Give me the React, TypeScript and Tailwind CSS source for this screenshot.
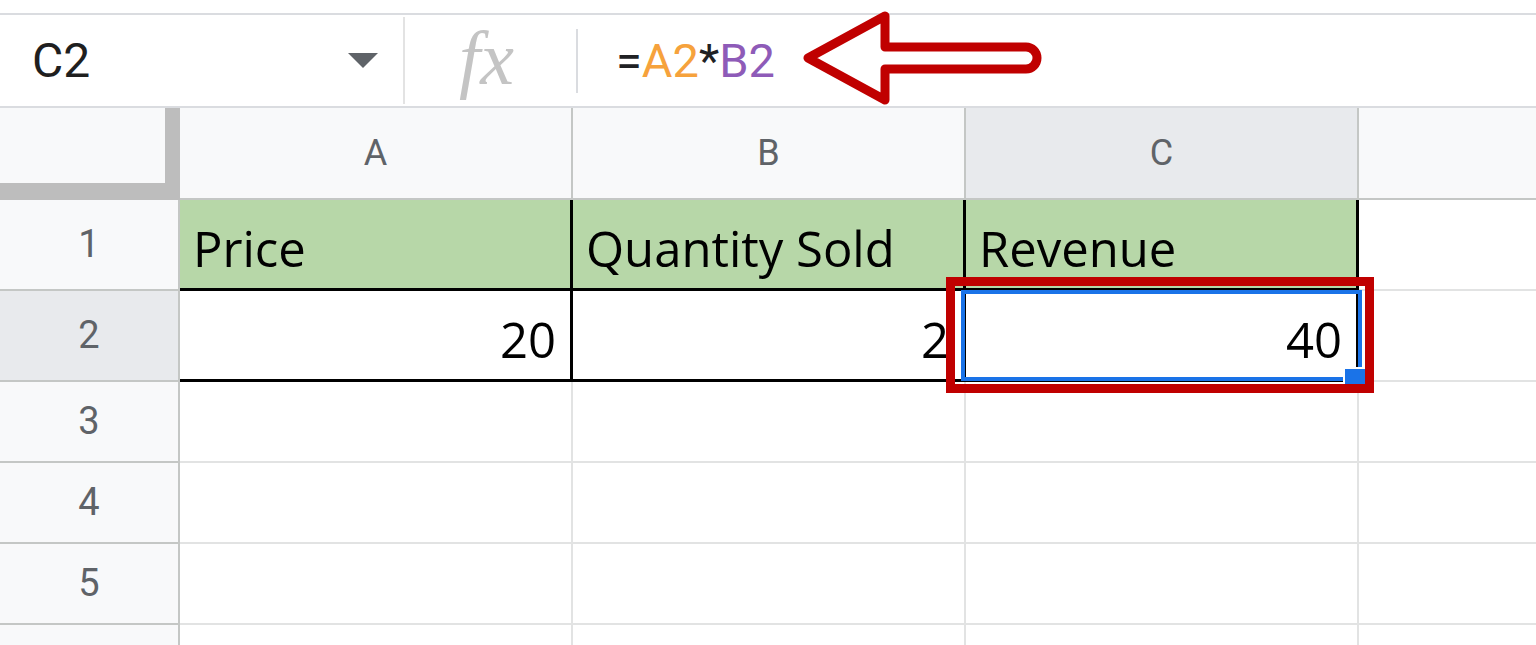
import React from "react";

const ROBOTO = { fontFamily: "Roboto, 'Liberation Sans', sans-serif" };
const CELLFONT = { fontFamily: "'Open Sans', 'Noto Sans', sans-serif" };

function RowHead({ n, h, active }: { n: string; h: string; active?: boolean }) {
  return (
    <div
      className={`w-[180px] shrink-0 flex items-center justify-center border-r-2 border-b-2 border-[#c4c7c5] text-[38px] text-[#5f6368] ${h} ${
        active ? "bg-[#e8eaed]" : "bg-[#f8f9fa]"
      }`}
      style={ROBOTO}
    >
      {n}
    </div>
  );
}

export default function App() {
  return (
    <div className="relative w-[1536px] h-[645px] overflow-hidden bg-white">
      <div className="h-[13px]" />
      <div className="h-[2px] bg-[#dadce0]" />
      {/* formula bar */}
      <div className="flex h-[93px] items-stretch border-b-2 border-[#dadce0]">
        <div className="w-[403px] flex items-center justify-between pl-[32px] pr-[25px]">
          <span className="text-[48px] text-[#1f1f1f] leading-none" style={ROBOTO}>
            C2
          </span>
          <svg width="30" height="15" viewBox="0 0 30 15">
            <path d="M0 0 L30 0 L15 15 Z" fill="#5f6368" />
          </svg>
        </div>
        <div className="w-[2px] bg-[#e3e3e3] my-[2px]" />
        <div className="w-[171px] flex items-center justify-center pr-[8px]">
          <span
            className="text-[76px] italic text-[#c4c4c4] leading-none pb-[6px]"
            style={{ fontFamily: "'Liberation Serif', 'DejaVu Serif', serif" }}
          >
            fx
          </span>
        </div>
        <div className="flex items-center">
          <div className="w-[2px] h-[64px] bg-[#dadce0]" />
        </div>
        <div className="flex items-center pl-[38px]">
          <span className="text-[47px] leading-none" style={ROBOTO}>
            <span className="text-[#202124]">=</span>
            <span className="text-[#f6a23c]">A2</span>
            <span className="text-[#202124]">*</span>
            <span className="text-[#8e5bb8]">B2</span>
          </span>
        </div>
      </div>

      {/* column headers */}
      <div className="flex h-[92px]">
        <div className="w-[180px] shrink-0 bg-[#f8f9fa] border-r-[15px] border-b-[17px] border-[#bdbdbd]" />
        {["A", "B", "C"].map((c) => (
          <div
            key={c}
            className={`w-[393px] shrink-0 flex items-center justify-center border-r-2 border-b-2 border-[#c4c7c5] text-[36px] text-[#5f6368] ${
              c === "C" ? "bg-[#e8eaed]" : "bg-[#f8f9fa]"
            }`}
            style={ROBOTO}
          >
            {c}
          </div>
        ))}
        <div className="flex-1 bg-[#f8f9fa] border-b-2 border-[#c4c7c5]" />
      </div>

      {/* row 1 */}
      <div className="flex h-[91px]">
        <RowHead n="1" h="h-[91px]" />
        {["Price", "Quantity Sold", "Revenue"].map((t) => (
          <div
            key={t}
            className="w-[393px] shrink-0 flex items-end pl-[13px] pb-[3px] bg-[#b7d7a8] border-r-[3px] border-b-[3px] border-black text-[49px] text-black"
            style={CELLFONT}
          >
            {t}
          </div>
        ))}
        <div className="flex-1 border-b-2 border-[#e2e3e3]" />
      </div>

      {/* row 2 */}
      <div className="flex h-[91px]">
        <RowHead n="2" h="h-[91px]" active />
        {["20", "2", "40"].map((t, i) => (
          <div
            key={i}
            className="w-[393px] shrink-0 flex items-end justify-end pr-[14px] pb-[3px] bg-white border-r-[3px] border-b-[3px] border-black text-[49px] text-black"
            style={CELLFONT}
          >
            {t}
          </div>
        ))}
        <div className="flex-1 border-b-2 border-[#e2e3e3]" />
      </div>

      {/* rows 3-6 */}
      {["3", "4", "5", ""].map((n, r) => (
        <div key={r} className="flex h-[81px]">
          <RowHead n={n} h="h-[81px]" />
          {[0, 1, 2].map((i) => (
            <div key={i} className="w-[393px] shrink-0 border-r-2 border-b-2 border-[#e2e3e3]" />
          ))}
          <div className="flex-1 border-b-2 border-[#e2e3e3]" />
        </div>
      ))}

      {/* selection */}
      <div className="absolute left-[961px] top-[290px] w-[401px] h-[91px] border-[4px] border-[#1a73e8]" />
      <div className="absolute left-[1343px] top-[367px] w-[22px] h-[17px] bg-[#1a73e8] border-l-2 border-t-2 border-white" />
      {/* red highlight box */}
      <div className="absolute left-[946px] top-[277px] w-[428px] h-[116px] border-[9px] border-[#c00000]" />

      {/* red arrow */}
      <svg
        className="absolute left-[795px] top-[5px]"
        width="255"
        height="110"
        viewBox="0 0 255 110"
      >
        <path
          d="M13 53 L90 11 L90 42 L231 42 A11 11 0 0 1 231 64 L90 64 L90 95 Z"
          fill="none"
          stroke="#c00000"
          strokeWidth="9"
          strokeLinejoin="round"
        />
      </svg>
    </div>
  );
}
